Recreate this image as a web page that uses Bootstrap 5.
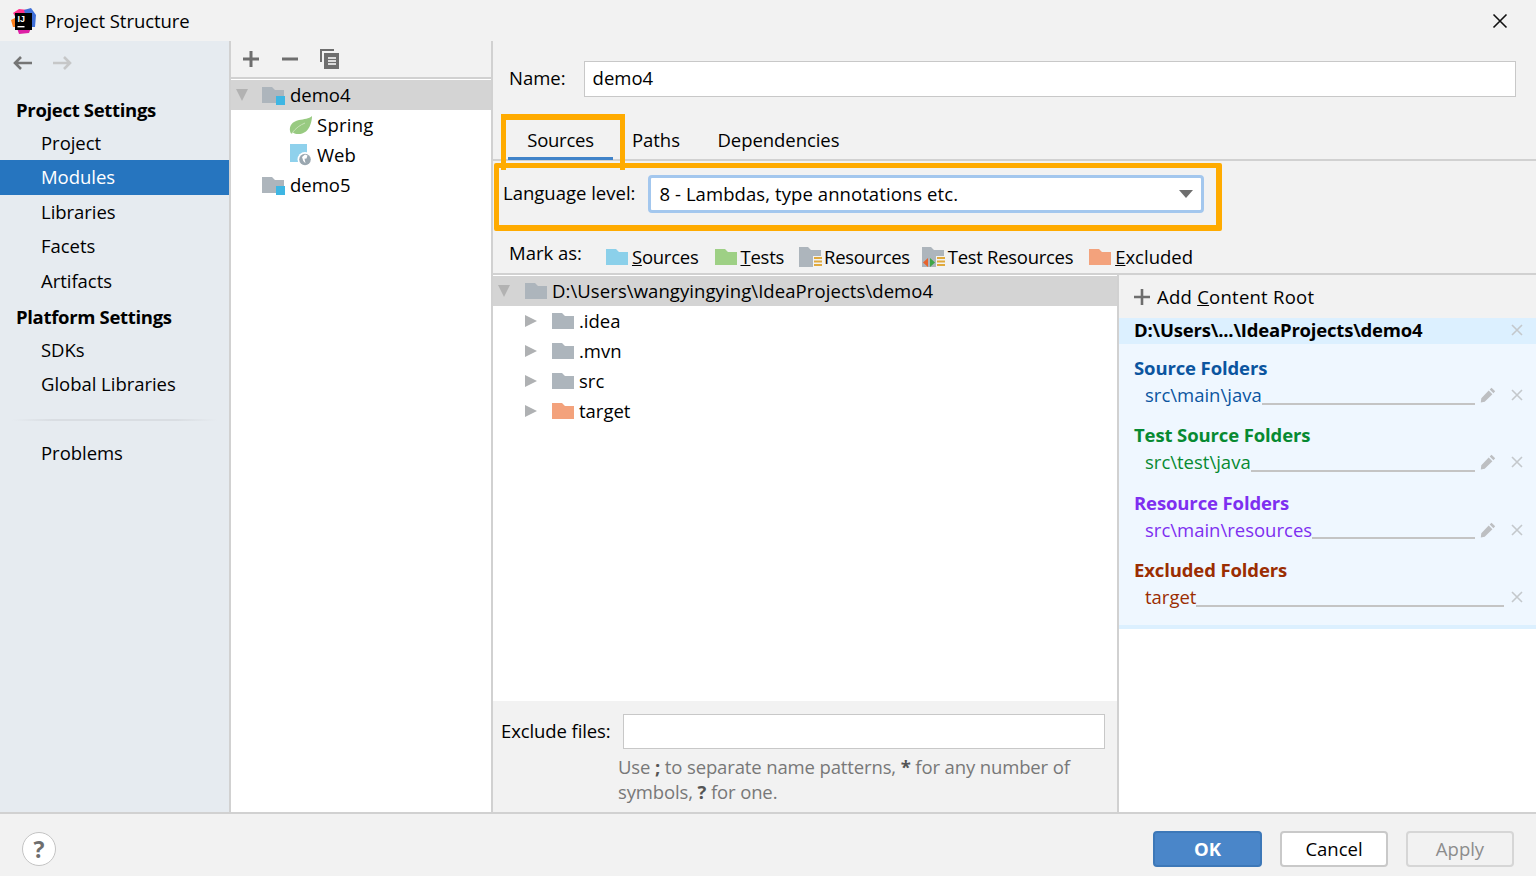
<!DOCTYPE html>
<html lang="en"><head><meta charset="utf-8"><title>Project Structure</title>
<link href="https://cdn.jsdelivr.net/npm/bootstrap@5.3.0/dist/css/bootstrap.min.css" rel="stylesheet">
<style>
html,body{margin:0;height:876px;overflow:hidden;background:#f2f2f2}
body{font-family:"Open Sans","Noto Sans",sans-serif;font-size:18.5px;color:#000;line-height:1.2;position:relative}
svg{display:block;flex:none}
.shell{height:876px}
.titlebar{height:41px;padding-left:10px;gap:9px;background:#f2f2f2}
.titletext{margin-top:2px;letter-spacing:-.05px}
.closex{margin-left:auto;margin-right:28px}
.workarea{height:771px}
.sidepane{width:231px;background:#e6ebf0;border-right:2px solid #d1d1d1;flex:none}
.navarrows{height:52px;padding:0 0 8px 12px;gap:19px}
.sidegroup{height:33px;padding:2px 0 0 16px;font-weight:700;flex:none;letter-spacing:-.32px}
.sidegroup.second{margin-top:2px;padding-top:1px}
.sideitem{height:34.4px;padding-left:41px;flex:none;letter-spacing:-.03px}
.sideitem.sel{background:#2675bf;color:#fff}
.sidesep{height:2px;margin:17.6px 12px 15px;background:linear-gradient(90deg,#e6ebf0,#d9dde2 20%,#d9dde2 80%,#e6ebf0)}
.modpane{width:262px;background:#fff;border-right:2px solid #d1d1d1;flex:none}
.modtools{height:38px;background:#f2f2f2;border-bottom:2px solid #d1d1d1;padding-left:12px;gap:23px;margin-bottom:1px}
.copyicon{margin-left:-1px}
.treerow{height:30px;flex:none}
.treerow.hl{background:#d4d4d4}
.twisty{width:0;height:0;flex:none}
.tw-down{border-left:6.5px solid transparent;border-right:6.5px solid transparent;border-top:12px solid #b2b2b2;margin-left:5px}
.tw-right{border-top:6.5px solid transparent;border-bottom:6.5px solid transparent;border-left:12px solid #afb1b3}
.modfold{margin-left:13px}
.modfold.open{margin-left:14px}
.modfold.flat{margin-left:31px}
.modbadge{margin:10px 0 0 -8px}
.modlabel{margin-left:5px}
.subrow{padding-left:58px}
.subrow span{margin-left:5px}
.springtext{letter-spacing:.25px}
.mainpane{flex:1;min-width:0;background:#f2f2f2}
.namerow{height:64px;padding:20px 20px 0 16px;gap:18px;flex:none}
.namelabel{padding-top:6px}
.fieldbox{border:1px solid #c8c8c8;border-radius:0;background:#fff;font-size:18.5px;color:#000;padding:0 8px 3px 8px;box-shadow:none;font-family:inherit;line-height:1.2}
.namefield{height:36px;flex:1;width:auto}
.tabrow{height:56px;border-bottom:2px solid #d1d1d1;padding-left:15px;flex:none;margin:0}
.tabitem{height:39px;align-items:center;display:flex;color:#000;margin-bottom:-1px;letter-spacing:-.05px}
.tabitem.on{border-bottom:3px solid #4083c9;width:105px;padding:3px 0 0;justify-content:center;letter-spacing:-.25px}
.tabitem.one{padding:0 18.5px 0 19px}
.tabitem.two{padding:0 19px}
.langrow{height:66px;padding:0 0 0 10px;gap:13px;flex:none}
.langrow label{margin-top:-1px}
.langsel{width:556px;height:38px;flex:none;border:3px solid #a3c7ee;border-radius:4px;background-color:#fff;padding:1px 30px 0 8px;font-size:18.5px;color:#000;box-shadow:none;font-family:inherit;line-height:1.2;letter-spacing:.08px;background-image:url("data:image/svg+xml,%3Csvg xmlns='http://www.w3.org/2000/svg' width='14' height='8'%3E%3Cpath d='M0 0h14L7 8z' fill='%236e6e6e'/%3E%3C/svg%3E");background-position:right 8px center;background-size:14px 8px}
.markrow{height:48px;border-bottom:2px solid #d1d1d1;padding:14px 0 0 16px;flex:none}
.marklabel{margin-right:24px;margin-top:-8px}
.markitem{gap:4px;margin-right:15px;letter-spacing:-.25px}
.markitem.first{margin-right:17px}
.markitem.tests{gap:3px}
.markitem.narrow{margin-right:12px;gap:1px;letter-spacing:-.33px}
.markitem.narrow2{margin-right:16px;gap:2px;letter-spacing:-.3px}
.markitem.last{letter-spacing:0}
.contentsplit{flex:1;min-height:0}
.treecol{width:626px;border-right:2px solid #d1d1d1;flex:none;background:#fff}
.treebody{flex:1;padding-top:1px}
.rootfold{margin-left:15px}
.rootlabel{margin-left:5px;letter-spacing:.08px}
.childrow{padding-left:32px}
.childrow svg{margin-left:15px}
.childrow span:last-child{margin-left:5px}
.excl{height:111px;background:#f2f2f2;padding:13px 11px 0 8px;flex:none}
.excllabel{white-space:nowrap;flex:none;width:122px;letter-spacing:-.1px}
.exclfield{width:482px;height:35px;flex:none}
.hinttext{color:#787878;padding:5px 0 0 117px;line-height:25px;letter-spacing:-.13px}
.hinttext b{color:#555}
.rootcol{flex:1;background:#fff;min-width:0}
.addroot{height:43px;background:#f2f2f2;padding-left:15px;gap:7px;padding-top:1px;flex:none;letter-spacing:.25px}
.roothead{height:26px;background:#dcf0ff;padding:0 13px 2px 15px;font-weight:700;flex:none;justify-content:space-between;letter-spacing:-.2px}
.rootbody{height:285px;background:#eff7ff;border-bottom:4px solid #dcf0ff;padding:10.7px 13px 0 15px;flex:none}
.foldhead{font-weight:700;height:27px;display:flex;align-items:center;letter-spacing:-.12px}
.foldrow{height:27px;padding-left:11px;margin-bottom:13.3px}
.fill{flex:1;border-bottom:2px solid #c4c4c4;align-self:flex-end;margin-bottom:4px}
.pen{margin:0 15px 0 5px}
.fillwide{margin-right:7px}
.c-src{color:#0b559f}.c-test{color:#078a32}.c-res{color:#7e2ff0}.c-exc{color:#9b2d02}
.footbar{height:64px;border-top:2px solid #d1d1d1;background:#f2f2f2;padding:0 22px;flex:none}
.helpbtn{width:34px;height:34px;border-radius:50%;border:1px solid #c4c4c4;background:#fff;color:#6e6e6e;font-weight:700;font-size:23px;padding:0;margin-top:8px}
.dlgbtn{height:36px;width:108px;padding:0;border-radius:4px;font-size:18.5px;border:2px solid #c9c9c9;background:#fff;color:#000;line-height:1;margin-top:8px;font-family:inherit}
.dlgbtn.okbtn{background:#4a86c9;border-color:#3d78b8;color:#fff;font-weight:700;margin-right:18px;width:109px}
.dlgbtn.applybtn{background:#f2f2f2;color:#8c8c8c;margin-left:18px;opacity:1;border-color:#d6d6d6}
.annot{position:absolute;border:5px solid #ffab00;pointer-events:none}
.annot.a1{left:501px;top:114px;width:124px;height:56px;border-width:6px 5px 0 5px}
.annot.a2{left:494px;top:163px;width:728px;height:68px;border-width:5px 6px 6px 5px;border-radius:2px}
</style></head>
<body>
<svg width="0" height="0" class="position-absolute"><defs>
<symbol id="fold" viewBox="0 0 22 18"><path d="M0 1h10l3 3h9v13H0z" fill="currentColor"/></symbol>
<symbol id="xm" viewBox="0 0 12 12"><path d="M1 1l10 10M11 1L1 11" stroke="#c4c8cc" stroke-width="1.6" fill="none"/></symbol>
<symbol id="pen" viewBox="0 0 16 16"><path d="M11.500 0.800l3.700 3.500-1.800 1.900-3.700-3.600zM8.700 3.600l3.700 3.600-7.700 7.600L.8 15.600l.5-4.300z" fill="#bdbfc2"/></symbol>
<symbol id="resic" viewBox="0 0 24 22"><path d="M0 1h9l3 3h10v6H14v11H0z" fill="#adb5bc"/><path d="M15 12h8M15 15.500h8M15 19h8" stroke="#e0a93c" stroke-width="2"/></symbol>
</defs></svg>
<div class="shell d-flex flex-column">
 <div class="titlebar d-flex align-items-center">
  <svg width="26" height="26" viewBox="0 0 26 26"><path d="M3 5l6-4 9 1v8H6z" fill="#ff318c"/><path d="M1 12l6-3v10H3z" fill="#fc801d"/><path d="M14 2l7-2 5 7-1 12h-6z" fill="#3f6fd8"/><path d="M7 20h14l-2 5-10 1z" fill="#dd1fa5"/><rect x="5" y="5" width="17" height="17" fill="#000"/><text x="7.500" y="14" font-size="9" font-weight="700" fill="#fff" font-family="Liberation Sans">IJ</text><rect x="7.500" y="18" width="7" height="1.400" fill="#fff"/></svg>
  <span class="titletext">Project Structure</span>
  <svg class="closex" width="16" height="16" viewBox="0 0 16 16"><path d="M1.500 1.500l13 13M14.500 1.500l-13 13" stroke="#111" stroke-width="1.600" fill="none"/></svg>
 </div>
 <div class="workarea d-flex">
  <div class="sidepane d-flex flex-column">
   <div class="navarrows d-flex align-items-center">
    <svg width="21" height="16" viewBox="0 0 21 16"><path d="M20 8H3M9 2L3 8l6 6" stroke="#757575" stroke-width="2.600" fill="none"/></svg>
    <svg width="21" height="16" viewBox="0 0 21 16"><path d="M1 8h17M12 2l6 6-6 6" stroke="#c6c7c8" stroke-width="2.600" fill="none"/></svg>
   </div>
   <div class="sidegroup d-flex align-items-center">Project Settings</div>
   <div class="sideitem d-flex align-items-center">Project</div>
   <div class="sideitem sel d-flex align-items-center">Modules</div>
   <div class="sideitem d-flex align-items-center">Libraries</div>
   <div class="sideitem d-flex align-items-center">Facets</div>
   <div class="sideitem d-flex align-items-center">Artifacts</div>
   <div class="sidegroup second d-flex align-items-center">Platform Settings</div>
   <div class="sideitem d-flex align-items-center">SDKs</div>
   <div class="sideitem d-flex align-items-center">Global Libraries</div>
   <div class="sidesep"></div>
   <div class="sideitem d-flex align-items-center">Problems</div>
  </div>
  <div class="modpane d-flex flex-column">
   <div class="modtools d-flex align-items-center">
    <svg width="16" height="16" viewBox="0 0 16 16"><path d="M8 0v16M0 8h16" stroke="#6e6e6e" stroke-width="3"/></svg>
    <svg width="16" height="16" viewBox="0 0 16 16"><path d="M0 8h16" stroke="#6e6e6e" stroke-width="3"/></svg>
    <svg class="copyicon" width="19" height="20" viewBox="0 0 19 20"><path d="M1 13V1h13" stroke="#6e6e6e" stroke-width="2" fill="none"/><rect x="4" y="4" width="15" height="16" fill="#6e6e6e"/><path d="M8 9h8M8 12h8M8 15h8" stroke="#fff" stroke-width="1.300"/></svg>
   </div>
   <div class="treerow hl d-flex align-items-center">
    <span class="twisty tw-down"></span>
    <svg class="modfold open" width="22" height="18" color="#adb5bc"><use href="#fold"/></svg>
    <svg class="modbadge" width="9" height="9"><rect width="9" height="9" fill="#3eb6e3"/></svg>
    <span class="modlabel">demo4</span>
   </div>
   <div class="treerow subrow d-flex align-items-center">
    <svg width="23" height="19" viewBox="0 0 23 19"><path d="M23 0C20 3 15 3 10 4 3 5.500 0 10 1 15c.2 1 .5 1.800 1 2.500.7.3 1.500-.3 2-1 3 2.500 9 2 13-1C21 12 23 5 23 0z" fill="#98ca81"/><path d="M3 17C7 12 11 9 16 7" stroke="#c8e2b8" stroke-width="1" fill="none"/></svg>
    <span class="springtext">Spring</span>
   </div>
   <div class="treerow subrow d-flex align-items-center">
    <svg width="23" height="23" viewBox="0 0 23 23"><rect x="1" width="17" height="18" fill="#8fd1ec"/><circle cx="16" cy="15.500" r="7.500" fill="#fff"/><circle cx="16" cy="15.500" r="5.800" fill="#9aa7b0"/><path d="M13 13l3-2.500 2.500 1-1 3-2 .3 1 4.500-2.200-2.300z" fill="#fff"/></svg>
    <span>Web</span>
   </div>
   <div class="treerow d-flex align-items-center">
    <svg class="modfold flat" width="22" height="18" color="#adb5bc"><use href="#fold"/></svg>
    <svg class="modbadge" width="9" height="9"><rect width="9" height="9" fill="#3eb6e3"/></svg>
    <span class="modlabel">demo5</span>
   </div>
  </div>
  <div class="mainpane d-flex flex-column">
   <div class="namerow d-flex align-items-start">
    <label class="namelabel">Name:</label>
    <input class="form-control fieldbox namefield" value="demo4">
   </div>
   <ul class="nav tabrow align-items-end">
    <li class="nav-item"><a class="tabitem on text-decoration-none" href="#">Sources</a></li>
    <li class="nav-item"><a class="tabitem one text-decoration-none" href="#">Paths</a></li>
    <li class="nav-item"><a class="tabitem two text-decoration-none" href="#">Dependencies</a></li>
   </ul>
   <div class="langrow d-flex align-items-center">
    <label>Language level:</label>
    <select class="form-select langsel"><option>8 - Lambdas, type annotations etc.</option></select>
   </div>
   <div class="markrow d-flex align-items-center">
    <span class="marklabel">Mark as:</span>
    <span class="markitem first d-flex align-items-center"><svg width="22" height="18" color="#8bd0ea"><use href="#fold"/></svg><span><u>S</u>ources</span></span>
    <span class="markitem tests d-flex align-items-center"><svg width="22" height="18" color="#9ed085"><use href="#fold"/></svg><span><u>T</u>ests</span></span>
    <span class="markitem narrow d-flex align-items-center"><svg width="24" height="22"><use href="#resic"/></svg><span>Resources</span></span>
    <span class="markitem narrow2 d-flex align-items-center"><svg width="24" height="22" viewBox="0 0 24 22"><use href="#resic" width="24" height="22"/><path d="M6 12v9l-5-4.500z" fill="#e8622c"/><path d="M8 12v9l5-4.500z" fill="#3fa648"/></svg><span>Test Resources</span></span>
    <span class="markitem last d-flex align-items-center"><svg width="22" height="18" color="#f3a27c"><use href="#fold"/></svg><span><u>E</u>xcluded</span></span>
   </div>
   <div class="contentsplit d-flex">
    <div class="treecol d-flex flex-column">
     <div class="treebody">
      <div class="treerow hl d-flex align-items-center"><span class="twisty tw-down"></span><svg class="rootfold" width="22" height="18" color="#adb5bc"><use href="#fold"/></svg><span class="rootlabel">D:\Users\wangyingying\IdeaProjects\demo4</span></div>
      <div class="treerow childrow d-flex align-items-center"><span class="twisty tw-right"></span><svg width="22" height="18" color="#adb5bc"><use href="#fold"/></svg><span>.idea</span></div>
      <div class="treerow childrow d-flex align-items-center"><span class="twisty tw-right"></span><svg width="22" height="18" color="#adb5bc"><use href="#fold"/></svg><span>.mvn</span></div>
      <div class="treerow childrow d-flex align-items-center"><span class="twisty tw-right"></span><svg width="22" height="18" color="#adb5bc"><use href="#fold"/></svg><span>src</span></div>
      <div class="treerow childrow d-flex align-items-center"><span class="twisty tw-right"></span><svg width="22" height="18" color="#f3a27c"><use href="#fold"/></svg><span>target</span></div>
     </div>
     <div class="excl">
      <div class="d-flex align-items-center"><label class="excllabel">Exclude files:</label><input class="form-control fieldbox exclfield"></div>
      <div class="hinttext">Use <b>;</b> to separate name patterns, <b>*</b> for any number of<br>symbols, <b>?</b> for one.</div>
     </div>
    </div>
    <div class="rootcol d-flex flex-column">
     <div class="addroot d-flex align-items-center"><svg width="16" height="16" viewBox="0 0 16 16"><path d="M8 0v16M0 8h16" stroke="#6e6e6e" stroke-width="2.600"/></svg><span>Add <u>C</u>ontent Root</span></div>
     <div class="roothead d-flex align-items-center"><span>D:\Users\...\IdeaProjects\demo4</span><svg width="12" height="12"><use href="#xm"/></svg></div>
     <div class="rootbody">
      <div class="foldhead c-src">Source Folders</div>
      <div class="foldrow d-flex align-items-center c-src"><span>src\main\java</span><span class="fill"></span><svg class="pen" width="16" height="16"><use href="#pen"/></svg><svg width="12" height="12"><use href="#xm"/></svg></div>
      <div class="foldhead c-test">Test Source Folders</div>
      <div class="foldrow d-flex align-items-center c-test"><span>src\test\java</span><span class="fill"></span><svg class="pen" width="16" height="16"><use href="#pen"/></svg><svg width="12" height="12"><use href="#xm"/></svg></div>
      <div class="foldhead c-res">Resource Folders</div>
      <div class="foldrow d-flex align-items-center c-res"><span>src\main\resources</span><span class="fill"></span><svg class="pen" width="16" height="16"><use href="#pen"/></svg><svg width="12" height="12"><use href="#xm"/></svg></div>
      <div class="foldhead c-exc">Excluded Folders</div>
      <div class="foldrow d-flex align-items-center c-exc"><span>target</span><span class="fill fillwide"></span><svg width="12" height="12"><use href="#xm"/></svg></div>
     </div>
    </div>
   </div>
  </div>
 </div>
 <div class="footbar d-flex align-items-center">
  <button class="btn helpbtn d-flex align-items-center justify-content-center">?</button>
  <button class="btn dlgbtn okbtn ms-auto">OK</button>
  <button class="btn dlgbtn">Cancel</button>
  <button class="btn dlgbtn applybtn" disabled>Apply</button>
 </div>
</div>
<div class="annot a1"></div>
<div class="annot a2"></div>
</body></html>
